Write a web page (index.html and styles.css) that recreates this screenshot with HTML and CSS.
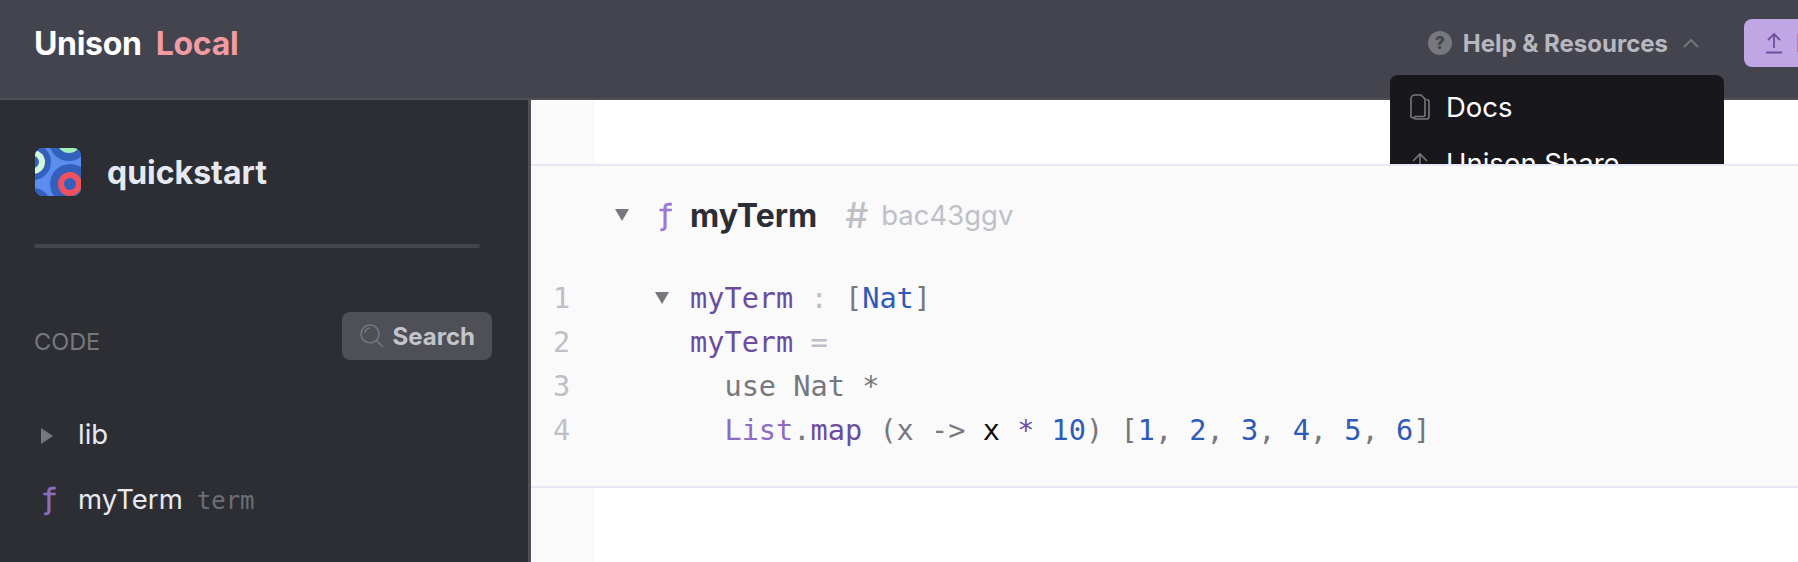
FILE: index.html
```html
<!DOCTYPE html>
<html lang="en">
<head>
<meta charset="utf-8">
<title>Unison Local</title>
<link rel="stylesheet" href="styles.css">
</head>
<body>
<div class="app">
  <header class="topbar">
    <a class="brand"><span class="brand-name">Unison</span><span class="brand-local">Local</span></a>
    <button class="help">
      <svg class="help-icon" viewBox="0 0 24 24"><circle cx="12" cy="12" r="12" fill="#77787e"/><text x="12" y="18" text-anchor="middle" class="help-q">?</text></svg>
      <span>Help &amp; Resources</span>
      <svg class="chev" viewBox="0 0 16 10"><path d="M1 9 8 2l7 7" fill="none" stroke="#77787e" stroke-width="1.800"/></svg>
    </button>
    <button class="publish">
      <svg class="pub-icon" viewBox="0 0 16 22"><path d="M8 16V2M2 8l6-6 6 6M0 20.500h16" fill="none" stroke="#6f4ea0" stroke-width="1.800"/></svg>
      <span>Publish on Share</span>
    </button>
    <div class="menu">
      <div class="menu-item">
        <svg class="menu-icon" viewBox="0 0 20 26"><path d="M5 1h6l4 4v16a1.500 1.500 0 0 1-1.500 1.500h-8.500A2 2 0 0 1 1 20.500V5a4 4 0 0 1 4-4zM16.500 5.500a2.500 2.500 0 0 1 2.500 2.500v14.500a2.500 2.500 0 0 1-2.500 2.500H6a2.500 2.500 0 0 1-2-1" fill="none" stroke="#77787e" stroke-width="1.600"/></svg>
        <span>Docs</span>
      </div>
      <div class="menu-item">
        <svg class="menu-icon" viewBox="0 0 20 26"><path d="M10 24V4M3 11l7-7 7 7" fill="none" stroke="#77787e" stroke-width="1.600"/></svg>
        <span>Unison Share</span>
      </div>
    </div>
  </header>
  <div class="body">
    <aside class="sidebar">
      <div class="project">
        <svg class="project-icon" viewBox="0 0 46 48">
          <defs><clipPath id="pc"><rect width="46" height="48" rx="8"/></clipPath></defs>
          <g clip-path="url(#pc)">
            <rect width="46" height="48" fill="#5b8def"/>
            <circle cx="35" cy="36" r="20" fill="#3360bd"/>
            <circle cx="35" cy="36" r="12" fill="#f0525d"/>
            <circle cx="35" cy="36" r="6" fill="#3360bd"/>
            <circle cx="34" cy="-7" r="20" fill="#3360bd"/>
            <circle cx="34" cy="-7" r="12" fill="#a0f0b8"/>
            <circle cx="-2" cy="14" r="18" fill="#3360bd"/>
            <circle cx="-2" cy="14" r="12" fill="#d2f8dc"/>
            <circle cx="-2" cy="14" r="6" fill="#3360bd"/>
            <circle cx="-2" cy="58" r="18" fill="#3360bd"/>
          </g>
        </svg>
        <span class="project-name">quickstart</span>
      </div>
      <div class="divider"></div>
      <div class="code-head">
        <span class="code-label">CODE</span>
        <button class="search">
          <svg class="search-icon" viewBox="0 0 24 24"><circle cx="10" cy="10" r="9" fill="none" stroke="#77787e" stroke-width="1.500"/><path d="M5 9a5 5 0 0 1 5-5M16.500 16.500 23 23" fill="none" stroke="#77787e" stroke-width="1.500"/></svg>
          <span>Search</span>
        </button>
      </div>
      <ul class="tree">
        <li class="tree-row"><span class="tree-mark"><svg class="caret-r" viewBox="0 0 12 16"><path d="M0 0l12 8-12 8z" fill="#77787e"/></svg></span><span class="tree-name">lib</span></li>
        <li class="tree-row"><span class="tree-mark fn">ƒ</span><span class="tree-name">myTerm</span><span class="tree-kind">term</span></li>
      </ul>
    </aside>
    <main class="main">
      <div class="gutter-top"><div class="gutter"></div></div>
      <section class="def">
        <div class="def-title">
          <svg class="caret-d title-caret" viewBox="0 0 14 12"><path d="M0 0h14L7 12z" fill="#77787e"/></svg>
          <span class="def-fn">ƒ</span>
          <span class="def-name">myTerm</span>
          <span class="def-hash"><span class="hash-mark">#</span>bac43ggv</span>
        </div>
        <div class="code">
          <div class="line"><span class="num">1</span><span class="fold"><svg class="caret-d" viewBox="0 0 14 12"><path d="M0 0h14L7 12z" fill="#77787e"/></svg></span><span class="src"><span class="t-name">myTerm</span> <span class="t-mute">:</span> <span class="t-grey">[</span><span class="t-blue">Nat</span><span class="t-grey">]</span></span></div>
          <div class="line"><span class="num">2</span><span class="fold"></span><span class="src"><span class="t-name">myTerm</span> <span class="t-mute">=</span></span></div>
          <div class="line"><span class="num">3</span><span class="fold"></span><span class="src"><span class="t-grey">  use Nat *</span></span></div>
          <div class="line"><span class="num">4</span><span class="fold"></span><span class="src">  <span class="t-lite">List</span><span class="t-grey">.</span><span class="t-name">map</span> <span class="t-grey">(x -&gt;</span> <span class="t-black">x</span> <span class="t-purple">*</span> <span class="t-blue">10</span><span class="t-grey">)</span> <span class="t-grey">[</span><span class="t-blue">1</span><span class="t-grey">,</span> <span class="t-blue">2</span><span class="t-grey">,</span> <span class="t-blue">3</span><span class="t-grey">,</span> <span class="t-blue">4</span><span class="t-grey">,</span> <span class="t-blue">5</span><span class="t-grey">,</span> <span class="t-blue">6</span><span class="t-grey">]</span></span></div>
        </div>
      </section>
      <div class="gutter-bottom"><div class="gutter"></div></div>
    </main>
  </div>
</div>
</body>
</html>
```
FILE: styles.css
```css
* { box-sizing: border-box; }
html, body { margin: 0; height: 100%; overflow: hidden; background: #fff; }
body { font-family: Inter, "Liberation Sans", sans-serif; }
button { border: 0; background: none; padding: 0; font: inherit; }
ul { list-style: none; margin: 0; padding: 0; }

.app { display: flex; flex-direction: column; width: 1798px; height: 562px; overflow: hidden; }

.topbar {
  position: relative;
  flex: none;
  height: 100px;
  padding: 0 0 12px 34px;
  display: flex;
  align-items: center;
  background: #44444e;
  border-bottom: 2px solid #4f5057;
}
.brand { display: flex; gap: 14px; font-size: 32px; font-weight: 700; letter-spacing: -0.3px; margin-right: auto; }
.brand-name { color: #fff; }
.brand-local { color: #f29ba4; }

.help { display: flex; align-items: center; color: #b7b8be; font-size: 24px; font-weight: 700; }
.help-icon { width: 24px; height: 24px; margin-right: 11px; }
.help-q { font-family: Inter, sans-serif; font-size: 17px; font-weight: 800; fill: #44444e; }
.chev { width: 16px; height: 10px; margin-left: 15px; }

.publish {
  flex: none;
  width: 240px;
  height: 48px;
  margin: 0 -186px 0 45px;
  padding-left: 22px;
  display: flex;
  align-items: center;
  gap: 14px;
  background: #c1a6e5;
  border-radius: 8px;
  color: #6f4ea0;
  font-size: 24px;
  font-weight: 700;
  white-space: nowrap;
}
.pub-icon { width: 16px; height: 22px; flex: none; }

.menu {
  position: absolute;
  left: 1390px;
  top: 75px;
  width: 334px;
  height: 89px;
  padding: 4px 20px 0;
  overflow: hidden;
  z-index: 2;
  background: #18181c;
  border-radius: 8px 8px 0 0;
  color: #fff;
  font-size: 27.500px;
}
.menu-item { display: flex; align-items: center; height: 56px; gap: 16px; }
.menu-icon { width: 20px; height: 26px; flex: none; }

.body { flex: 1; display: flex; min-height: 0; }

.sidebar {
  flex: none;
  width: 531px;
  padding: 0 36px 0 34px;
  background: #2d2e33;
  border-right: 3px solid #4f5057;
  color: #e6e9f2;
}
.project { display: flex; align-items: center; gap: 25px; padding-top: 48px; }
.project-icon { width: 48px; height: 48px; flex: none; }
.project-name { font-size: 32px; font-weight: 700; }
.divider { height: 4px; margin: 48px 12px 0 0; border-radius: 2px; background: #44444e; }
.code-head { display: flex; justify-content: space-between; align-items: center; margin-top: 64px; }
.code-label { margin-top: 10px; font-size: 23.500px; color: #77787e; }
.search { display: flex; align-items: center; gap: 9px; height: 48px; padding: 0 17px 0 18px; border-radius: 8px; background: #4f5057; color: #c4c5cc; font-size: 24px; font-weight: 700; }
.search-icon { width: 24px; height: 24px; }
.tree { margin-top: 41px; }
.tree-row { display: flex; align-items: center; height: 65px; font-size: 27.500px; }
.tree-mark { width: 44px; flex: none; padding-left: 7px; display: flex; align-items: center; }
.caret-r { width: 12px; height: 16px; margin-top: 4px; }
.fn { color: #8d6cc0; font-family: "DejaVu Sans Mono", monospace; -webkit-text-stroke: 0.6px #8d6cc0; }
.tree-kind { margin-left: 14px; margin-top: 4px; font-family: "DejaVu Sans Mono", monospace; font-size: 24px; color: #6e6f75; }

.main { flex: 1; min-width: 0; display: flex; flex-direction: column; }
.gutter-top, .gutter-bottom { display: flex; background: #fff; }
.gutter-top { height: 64px; flex: none; }
.gutter-bottom { flex: 1; }
.gutter { width: 64px; background: #fafafa; }

.def { position: relative; z-index: 3; flex: none; height: 324px; background: #fafafb; border-top: 2px solid #e6e9f5; border-bottom: 2px solid #e6e9f5; }
.def-title { display: flex; align-items: center; height: 98px; padding: 0 0 0 84px; }
.caret-d { width: 14px; height: 12px; }
.title-caret { margin-right: 28px; }
.def-fn { width: 33px; font-family: "DejaVu Sans Mono", monospace; font-size: 28px; color: #9a78d4; -webkit-text-stroke: 0.5px #9a78d4; }
.def-name { font-size: 32px; font-weight: 700; color: #2d2e35; }
.def-hash { display: flex; align-items: center; margin-left: 28px; font-size: 27.500px; color: #bfc0c7; }
.hash-mark { margin-right: 13px; font-size: 36px; font-weight: 500; }

.code { margin-top: 12px; font-family: "DejaVu Sans Mono", monospace; font-size: 28.600px; line-height: 44px; }
.line { display: flex; align-items: center; height: 44px; }
.src { white-space: pre; }
.num { width: 124px; padding-left: 22px; color: #bfc0c7; }
.fold { width: 35px; display: flex; align-items: center; }
.t-name { color: #6b4c9e; }
.t-mute { color: #bfc0c7; }
.t-grey { color: #77787e; }
.t-blue { color: #2f5bb7; }
.t-lite { color: #8d6cc4; }
.t-black { color: #111; }
.t-purple { color: #6b4c9e; }
```
